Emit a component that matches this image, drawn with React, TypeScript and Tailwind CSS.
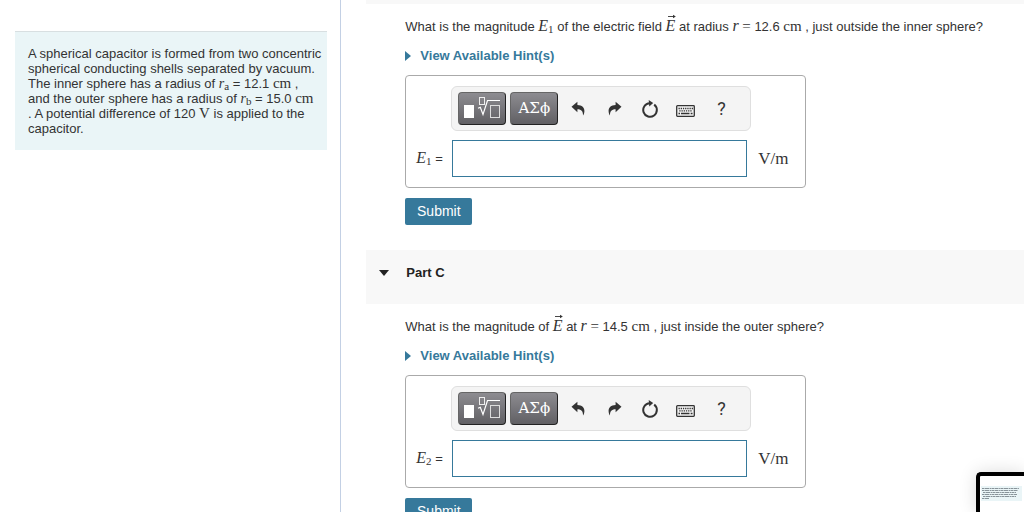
import type { ReactNode } from "react";

function Var({ children, sub, upright }: { children: ReactNode; sub?: string; upright?: boolean }) {
  return (
    <span className={upright ? "font-['Liberation_Serif',serif] text-[14px] leading-none" : "font-['Liberation_Serif',serif] text-[16px] leading-none"}>
      <i>{children}</i>
      {sub && <span className="relative top-[2px] text-[11px]">{sub}</span>}
    </span>
  );
}

function Unit({ children }: { children: ReactNode }) {
  return <span className="font-['Liberation_Serif',serif] text-[15px] leading-none">{children}</span>;
}

function VectorE() {
  return (
    <span className="relative inline-block font-['Liberation_Serif',serif] text-[16px] leading-none italic">
      E
      <svg className="absolute -top-1 left-[2px] h-[5px] w-[8px]" viewBox="0 0 8 5" aria-hidden="true">
        <path d="M0 2.5H7" fill="none" stroke="#333" strokeWidth="0.9" />
        <path d="M5 .8L7.8 2.5L5 4.2Z" fill="#333" />
      </svg>
    </span>
  );
}

function TemplateIcon() {
  return (
    <svg className="h-[21px] w-[38px]" viewBox="0 0 38 21" fill="none" aria-hidden="true">
      <rect x="1" y="8" width="10" height="13" fill="#fff" />
      <rect x="16.5" y="0.5" width="5" height="7" stroke="#eee" />
      <path d="M15 11.2L17.3 10.2L20 17.5L24.5 3.5H37" stroke="#fff" strokeWidth="1.2" />
      <rect x="27.5" y="8.5" width="9" height="12" stroke="#ddd" />
    </svg>
  );
}

function ReplyArrow({ flip }: { flip?: boolean }) {
  return (
    <svg
      className={flip ? "h-[15px] w-[14px] -scale-x-100" : "h-[15px] w-[14px]"}
      viewBox="0 0 14 15"
      fill="#333"
      aria-hidden="true"
    >
      <path d="M0.5 5.8L6.4 0.8V3.9C11 4 13.6 6.5 13.4 10.2C13.3 12 12.8 13.4 12 14.6C12.2 10.5 10.6 8.2 6.4 8.2V11.2Z" />
    </svg>
  );
}

function ResetIcon() {
  return (
    <svg className="h-[18px] w-[18px]" viewBox="0 0 18 18" aria-hidden="true">
      <path d="M13.2 4.6A6.8 6.8 0 1 1 8.6 3.2" fill="none" stroke="#333" strokeWidth="2" />
      <path d="M7.7 0L12.2 3L8.3 6.4Z" fill="#333" />
    </svg>
  );
}

function KeyboardIcon() {
  return (
    <svg className="h-[12px] w-[19px]" viewBox="0 0 19 12" fill="none" stroke="#333" aria-hidden="true">
      <rect x="0.7" y="0.7" width="17.6" height="10.6" rx="0.8" strokeWidth="1.3" />
      <path d="M2.5 3.5H17" strokeDasharray="1.3 0.9" strokeWidth="1.3" />
      <path d="M3.3 5.9H16.5" strokeDasharray="1.3 0.9" strokeWidth="1.3" />
      <path d="M2.5 8.5H4M5 8.5H13.5M14.7 8.5H16.5" strokeWidth="1.3" />
    </svg>
  );
}

const padButton =
  "flex h-[33px] w-12 items-center justify-center rounded border border-[#666] border-r-[#222] border-b-[#222] bg-linear-to-b from-[#8d8c91] to-[#616064] text-white";

function AnswerPanel({ id, sub }: { id: string; sub: string }) {
  return (
    <>
      <div className="mt-[10px] w-[401px] max-w-full rounded border border-[#aaa] p-[10px]">
        <div role="toolbar" aria-label="Equation tools" className="ml-[35px] flex h-[45px] w-[300px] items-center rounded-[6px] border border-[#dfdfdf] bg-[#f4f4f4] pl-[6px] text-[#333]">
          <button type="button" aria-label="Templates" className={`${padButton} pb-[2px]`}>
            <TemplateIcon />
          </button>
          <button type="button" aria-label="Symbols" className={`${padButton} ml-1 font-['DejaVu_Serif',serif] text-[15px]`}>
            ΑΣϕ
          </button>
          <button type="button" aria-label="Undo" className="ml-[13px]">
            <ReplyArrow />
          </button>
          <button type="button" aria-label="Redo" className="ml-[23px]">
            <ReplyArrow flip />
          </button>
          <button type="button" aria-label="Reset" className="ml-[19px]">
            <ResetIcon />
          </button>
          <button type="button" aria-label="Keyboard shortcuts" className="mt-1 ml-[17px]">
            <KeyboardIcon />
          </button>
          <button type="button" aria-label="Help" className="ml-[22px] font-[Roboto,sans-serif] text-[18px] leading-none">
            ?
          </button>
        </div>
        <div className="mt-[9px] flex items-center">
          <label htmlFor={id} className="w-[36px] shrink-0 whitespace-nowrap text-[13px]">
            <Var sub={sub}>E</Var> =
          </label>
          <input id={id} type="text" className="h-[37px] w-[295px] min-w-0 border border-[#36799b] bg-white px-2 text-[14px] outline-none" />
          <span className="ml-[11px] font-['Liberation_Serif',serif] text-[17px] leading-6">V/m</span>
        </div>
      </div>
      <button type="button" className="mt-[10px] block h-[27px] w-[67px] rounded-[2px] bg-[#36799b] text-[14px] text-white">
        Submit
      </button>
    </>
  );
}

function Hints() {
  return (
    <a href="#hints" className="mt-[11px] flex items-center text-[13px] leading-[18px] font-bold text-[#36799b]">
      <svg className="mr-[9px] h-[10px] w-[6px]" viewBox="0 0 6 10" fill="currentColor" aria-hidden="true">
        <path d="M0 0L6 5L0 10Z" />
      </svg>
      View Available Hint(s)
    </a>
  );
}

export default function App() {
  return (
    <div className="relative flex h-screen overflow-hidden bg-white font-['Liberation_Sans',Arial,sans-serif] text-[#333]">
      <aside className="w-1/3 shrink-0 border-r border-[#c3d0e4] pt-[31px] pr-[13px] pl-[15px]">
        <p className="border-t border-[#d8dfe1] bg-[#eaf5f7] py-[14px] pr-1 pl-[13px] text-[13px] leading-[15px]">
          A spherical capacitor is formed from two concentric
          <br />
          spherical conducting shells separated by vacuum.
          <br />
          The inner sphere has a radius of{" "}
          <Var upright sub="a">
            r
          </Var>{" "}
          = 12.1 <Unit>cm</Unit> ,
          <br />
          and the outer sphere has a radius of{" "}
          <Var upright sub="b">
            r
          </Var>{" "}
          = 15.0 <Unit>cm</Unit>
          <br />. A potential difference of 120 <Unit>V</Unit> is applied to the
          <br />
          capacitor.
        </p>
      </aside>
      <main className="min-w-0 flex-1 pl-[25px]">
        <div className="h-1 bg-[#f8f8f8]" />
        <section className="pt-[14px] pb-[25px] pl-[39px]">
          <p className="text-[13px] leading-[18px]">
            What is the magnitude <Var sub="1">E</Var> of the electric field <VectorE /> at radius <Var>r</Var>{" "}
            <Unit>=</Unit> 12.6 <Unit>cm</Unit> , just outside the inner sphere?
          </p>
          <Hints />
          <AnswerPanel id="e1" sub="1" />
        </section>
        <h2 className="bg-[#f8f8f8] text-[13px] font-bold text-[#222]">
          <button type="button" aria-expanded="true" className="flex h-[54px] w-full items-center pb-2 pl-[13px]">
            <svg className="mr-[17px] h-[6px] w-[10px]" viewBox="0 0 10 6" fill="currentColor" aria-hidden="true">
              <path d="M0 0H10L5 6Z" />
            </svg>
            Part C
          </button>
        </h2>
        <section className="pt-[14px] pb-[25px] pl-[39px]">
          <p className="text-[13px] leading-[18px]">
            What is the magnitude of <VectorE /> at <Var>r</Var> <Unit>=</Unit> 14.5 <Unit>cm</Unit> , just inside the
            outer sphere?
          </p>
          <Hints />
          <AnswerPanel id="e2" sub="2" />
        </section>
      </main>
      <div aria-hidden="true" className="absolute right-0 bottom-0 h-10 w-12 rounded-tl-[5px] border-t-4 border-l-4 border-black bg-white pt-[10px] pl-px shadow-[0_0_18px_rgba(0,0,0,0.14)]">
        <svg className="h-[15px] w-[41px] bg-[#eaf5f7]" viewBox="0 0 41 15" stroke="#889399" strokeWidth="1" strokeDasharray="2.5 0.5 4 0.6 1.5 0.4">
          <path d="M1 2.5H38M1 4.5H37M2 6.5H35M1 8.5H36M2 10.5H35M1 12.5H8" />
        </svg>
      </div>
    </div>
  );
}
